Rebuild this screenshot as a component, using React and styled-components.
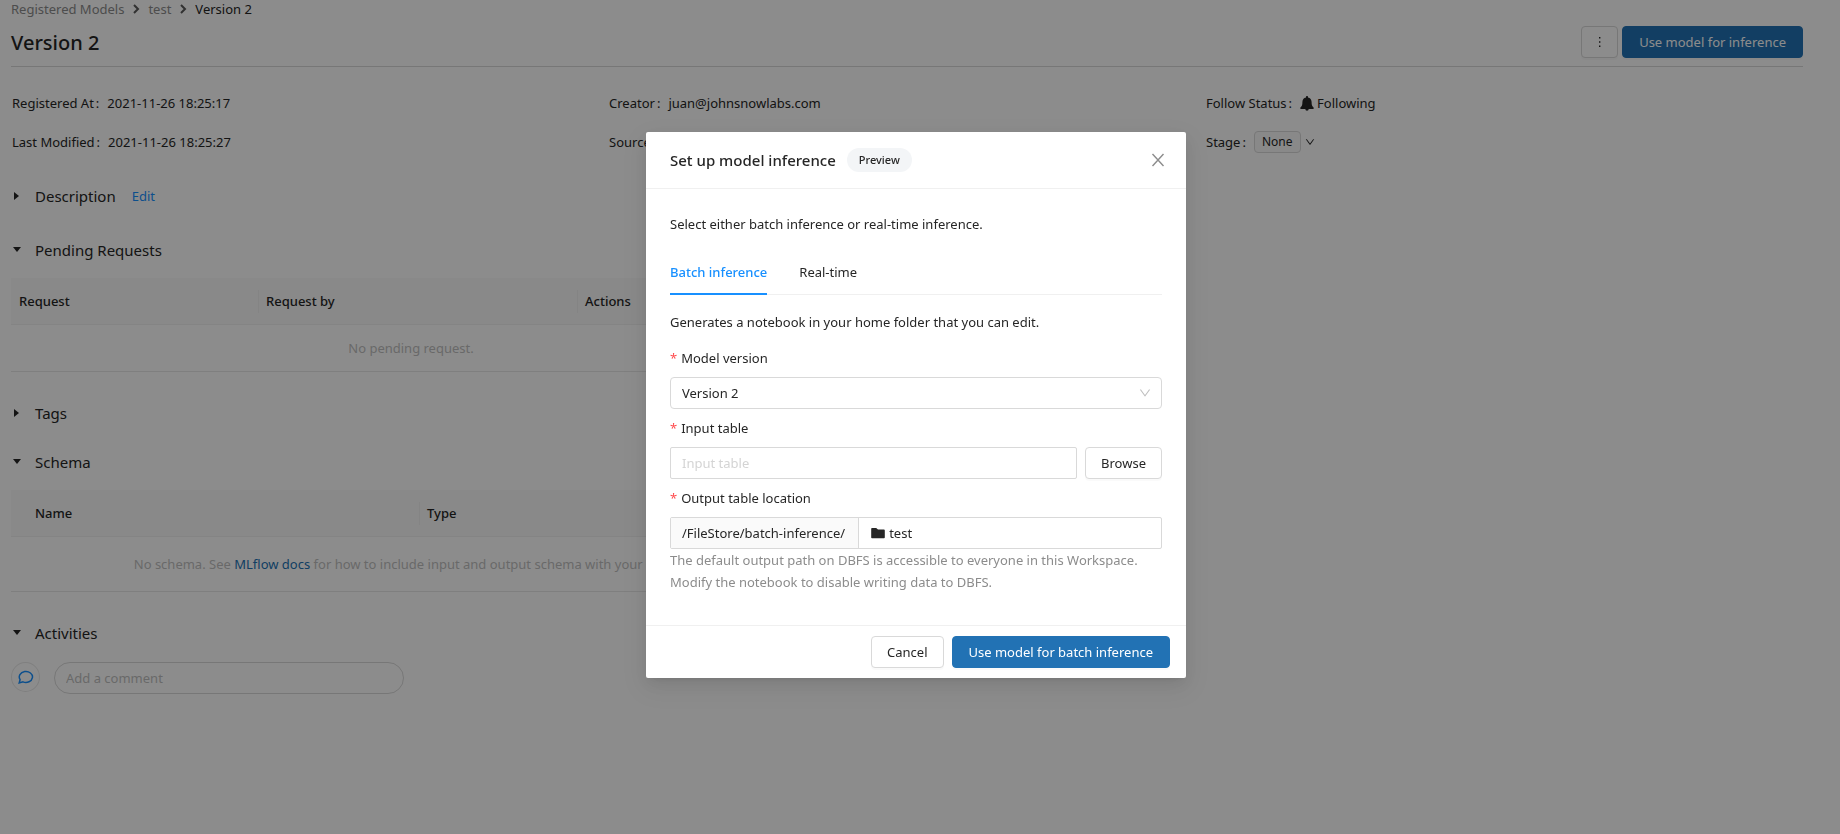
import React, { useState } from "react";
import styled, { createGlobalStyle } from "styled-components";

const GlobalStyle = createGlobalStyle`
  * {
    box-sizing: border-box;
  }

  body {
    margin: 0;
    background: #fff;
    color: #262626;
    font-family: "Noto Sans", "Open Sans", sans-serif;
    font-size: 13px;
    line-height: 22px;
  }

  button,
  input,
  select {
    font: inherit;
    color: inherit;
  }

  p,
  h1,
  h2 {
    margin: 0;
  }

  a {
    color: #2272b4;
    text-decoration: none;
  }
`;

const Page = styled.main`
  min-height: 100vh;
  padding: 0 37px 0 11px;
  overflow: hidden;
`;

const Breadcrumb = styled.nav`
  display: flex;
  align-items: center;
  gap: 7px;
  height: 18px;
  line-height: 18px;

  a {
    color: #8c8c8c;
  }

  svg {
    color: #595959;
  }
`;

const TitleBar = styled.header`
  display: flex;
  align-items: center;
  justify-content: space-between;
  height: 49px;
  border-bottom: 1px solid #d9d9d9;
`;

const Title = styled.h1`
  padding-top: 2px;
  font-size: 20px;
  font-weight: 500;
  line-height: 32px;
`;

const Actions = styled.div`
  display: flex;
  gap: ${(p) => p.$gap};
`;

const Button = styled.button`
  height: 32px;
  padding: 0 ${(p) => (p.$primary ? "16px" : "15px")};
  border: 1px solid ${(p) => (p.$primary ? "#2272b4" : "#d9d9d9")};
  border-radius: 4px;
  background: ${(p) => (p.$primary ? "#2272b4" : "#fff")};
  color: ${(p) => (p.$primary ? "#fff" : "#262626")};
  box-shadow: 0 2px 0 rgba(0, 0, 0, 0.02);
  white-space: nowrap;

  svg {
    display: block;
  }
`;

const Details = styled.dl`
  display: grid;
  grid-template-columns: repeat(3, 1fr);
  row-gap: 17px;
  margin: 25px 0 0;
  padding-left: 1px;
`;

const Detail = styled.div`
  display: flex;
  align-items: center;
  gap: 8px;
  height: 22px;

  dt::after {
    content: ":";
    margin-left: 2px;
  }

  dd {
    display: flex;
    align-items: center;
    gap: 3px;
    margin: 0;
  }
`;

const StageTag = styled.button`
  display: flex;
  align-items: center;
  gap: 4px;
  padding: 0;
  border: 0;
  background: none;
  font-size: 12px;

  span {
    height: 22px;
    padding: 0 7px;
    border: 1px solid #d9d9d9;
    border-radius: 4px;
    background: #fafafa;
    line-height: 20px;
  }
`;

const Section = styled.section`
  margin-top: ${(p) => p.$space};
`;

const SectionHead = styled.div`
  display: flex;
  align-items: center;
  gap: 16px;
  height: 24px;

  h2 {
    font-size: 15px;
    font-weight: 400;
    line-height: 24px;
  }

  a {
    color: #1890ff;
  }
`;

const Toggle = styled.button`
  display: flex;
  align-items: center;
  gap: 12px;
  padding: 0;
  border: 0;
  background: none;
`;

const DataTable = styled.table`
  width: 800px;
  margin-top: 16px;
  border-collapse: separate;
  border-spacing: 0;
  table-layout: fixed;

  th {
    height: 47px;
    padding: 0 8px;
    border-bottom: 1px solid #f0f0f0;
    background: #fafafa;
    text-align: left;
    font-weight: 500;
  }

  th:first-child {
    padding-left: ${(p) => p.$indent};
  }

  th + th {
    background: linear-gradient(#f0f0f0, #f0f0f0) left center / 1px 23px
      no-repeat #fafafa;
  }

  td {
    height: ${(p) => p.$rowHeight};
    border-bottom: 1px solid #e8e8e8;
    color: #bfbfbf;
    text-align: center;
  }
`;

const CommentRow = styled.div`
  display: flex;
  gap: 14px;
  margin-top: 17px;
`;

const Avatar = styled.span`
  display: flex;
  align-items: center;
  justify-content: center;
  width: 29px;
  height: 30px;
  border: 1px solid #e8e8e8;
  border-radius: 50%;
  color: #1890ff;
`;

const TextInput = styled.input`
  flex: ${(p) => (p.$pill ? "0 0 350px" : "1")};
  min-width: 0;
  height: 32px;
  padding: 0 11px;
  border: 1px solid #d9d9d9;
  border-radius: ${(p) => (p.$pill ? "16px" : "2px")};
  background: #fff;
  outline: 0;

  &::placeholder {
    color: ${(p) => (p.$pill ? "#bfbfbf" : "#d4d4d4")};
  }
`;

const Overlay = styled.div`
  position: fixed;
  inset: 0;
  display: flex;
  align-items: flex-start;
  justify-content: center;
  padding: 132px 8px 0 0;
  background: rgba(0, 0, 0, 0.45);
`;

const Modal = styled.div`
  width: 540px;
  border-radius: 2px;
  background: #fff;
  box-shadow: 0 3px 6px -4px rgba(0, 0, 0, 0.12),
    0 6px 16px 0 rgba(0, 0, 0, 0.08), 0 9px 28px 8px rgba(0, 0, 0, 0.05);
`;

const ModalHeader = styled.header`
  display: flex;
  align-items: center;
  gap: 11px;
  height: 57px;
  padding: 0 20px 0 24px;
  border-bottom: 1px solid #f0f0f0;

  h2 {
    font-size: 15px;
    font-weight: 500;
    line-height: 22px;
  }
`;

const Pill = styled.span`
  height: 24px;
  padding: 0 12px;
  border-radius: 12px;
  background: #f3f5f7;
  font-size: 11px;
  font-weight: 500;
  line-height: 24px;
`;

const CloseButton = styled.button`
  display: flex;
  margin-left: auto;
  padding: 0;
  border: 0;
  background: none;
  color: #8c8c8c;
`;

const ModalBody = styled.div`
  padding: 24px 24px 32px;
`;

const TabList = styled.div`
  display: flex;
  gap: 32px;
  margin: 14px 0 16px;
  border-bottom: 1px solid #f0f0f0;
`;

const Tab = styled.button`
  height: 46px;
  margin-bottom: -1px;
  padding: 2px 0 0;
  border: 0;
  border-bottom: 2px solid ${(p) => (p.$active ? "#1890ff" : "transparent")};
  background: none;
  color: ${(p) => (p.$active ? "#1890ff" : "#262626")};
  font-weight: ${(p) => (p.$active ? 500 : 400)};
`;

const Intro = styled.p`
  margin-bottom: 6px;
`;

const Field = styled.div`
  padding-top: 8px;

  label {
    display: block;
    height: 30px;
  }

  label::before {
    content: "*";
    margin: 0 4px 0 0;
    color: #ff4d4f;
  }
`;

const SelectBox = styled.div`
  display: grid;
  align-items: center;

  select,
  svg {
    grid-area: 1 / 1;
  }

  select {
    height: 32px;
    padding: 0 11px;
    border: 1px solid #d9d9d9;
    border-radius: 4px;
    background: #fff;
    appearance: none;
  }

  svg {
    justify-self: end;
    margin-right: 11px;
    color: #bfbfbf;
    pointer-events: none;
  }
`;

const InputRow = styled.div`
  display: flex;
  gap: 8px;
`;

const PathInput = styled.div`
  display: flex;
  align-items: center;
  height: 32px;
  border: 1px solid #d9d9d9;
  border-radius: 2px;

  span {
    padding: 0 13px 0 11px;
    border-right: 1px solid #d9d9d9;
    background: #fafafa;
    line-height: 30px;
  }

  svg {
    margin: 0 4px 0 12px;
  }

  input {
    flex: 1;
    min-width: 0;
    padding: 0;
    border: 0;
    outline: 0;
    background: none;
  }
`;

const Help = styled.p`
  color: #8c8c8c;
`;

const ModalFooter = styled.footer`
  display: flex;
  justify-content: flex-end;
  padding: 10px 16px;
  border-top: 1px solid #f0f0f0;
`;

function Crumb() {
  return (
    <svg width="10" height="10" viewBox="0 0 10 10" fill="none" stroke="currentColor" strokeWidth="2">
      <path d="M3 1l4 4-4 4" />
    </svg>
  );
}

function Dots() {
  return (
    <svg width="5" height="14" viewBox="0 0 5 14" fill="currentColor">
      <path d="M2 2h1.400v1.400H2zM2 6.300h1.400v1.400H2zM2 10.600h1.400V12H2z" />
    </svg>
  );
}

function Caret({ open }) {
  return (
    <svg width="12" height="12" viewBox="0 0 12 12" fill="currentColor">
      <path d={open ? "M2 3h8L6 8z" : "M3 2v8l5-4z"} />
    </svg>
  );
}

function Chevron({ size }) {
  return (
    <svg width={size} height={size} viewBox="64 64 896 896" fill="currentColor">
      <path d="M884 256h-75c-5.100 0-9.900 2.500-12.900 6.600L512 654.200 227.900 262.600c-3-4.100-7.800-6.600-12.900-6.600h-75c-6.500 0-10.300 7.400-6.500 12.700l352.600 486.100c12.800 17.600 39 17.600 51.700 0l352.600-486.100c3.900-5.300.1-12.700-6.400-12.700z" />
    </svg>
  );
}

function Bell() {
  return (
    <svg width="14" height="15" viewBox="0 0 14 15" fill="currentColor">
      <path d="M7 0c.6 0 1 .4 1 1v.5c2.300.5 3.600 2.300 3.600 4.500 0 3 .5 4.300 2 5.400V13H.4v-1.600c1.500-1.100 2-2.400 2-5.400 0-2.200 1.300-4 3.600-4.500V1c0-.6.4-1 1-1zM5.300 13h3.400a1.700 1.800 0 0 1-3.400 0z" />
    </svg>
  );
}

function Folder() {
  return (
    <svg width="14" height="12" viewBox="0 0 14 12" fill="currentColor">
      <path d="M1 1h4.200L7 2.600h6c.4 0 .8.300.8.800v7c0 .4-.4.800-.8.800H1c-.5 0-.8-.4-.8-.8V1.800c0-.5.3-.8.8-.8z" />
    </svg>
  );
}

function Collapsible({ title, open, space, extra, children }) {
  const [expanded, setExpanded] = useState(open);

  return (
    <Section $space={space}>
      <SectionHead>
        <Toggle aria-expanded={expanded} onClick={() => setExpanded(!expanded)}>
          <Caret open={expanded} />
          <h2>{title}</h2>
        </Toggle>
        {extra}
      </SectionHead>
      {expanded && children}
    </Section>
  );
}

function InferenceModal() {
  const [tab, setTab] = useState("batch");
  const [path, setPath] = useState("test");

  return (
    <Overlay>
      <Modal role="dialog" aria-labelledby="modal-title">
        <ModalHeader>
          <h2 id="modal-title">Set up model inference</h2>
          <Pill>Preview</Pill>
          <CloseButton aria-label="Close">
            <svg width="16" height="16" viewBox="0 0 16 16" fill="none" stroke="currentColor" strokeWidth="1.400">
              <path d="M2.500 2l11 12M13.500 2l-11 12" />
            </svg>
          </CloseButton>
        </ModalHeader>
        <ModalBody>
          <p>Select either batch inference or real-time inference.</p>
          <TabList role="tablist">
            <Tab role="tab" $active={tab === "batch"} onClick={() => setTab("batch")}>
              Batch inference
            </Tab>
            <Tab role="tab" $active={tab === "realtime"} onClick={() => setTab("realtime")}>
              Real-time
            </Tab>
          </TabList>
          <Intro>Generates a notebook in your home folder that you can edit.</Intro>
          <Field>
            <label htmlFor="version">Model version</label>
            <SelectBox>
              <select id="version">
                <option>Version 2</option>
              </select>
              <Chevron size={12} />
            </SelectBox>
          </Field>
          <Field>
            <label htmlFor="input-table">Input table</label>
            <InputRow>
              <TextInput id="input-table" placeholder="Input table" />
              <Button>Browse</Button>
            </InputRow>
          </Field>
          <Field>
            <label htmlFor="output-path">Output table location</label>
            <PathInput>
              <span>/FileStore/batch-inference/</span>
              <Folder />
              <input id="output-path" value={path} onChange={(e) => setPath(e.target.value)} />
            </PathInput>
          </Field>
          <Help>
            The default output path on DBFS is accessible to everyone in this Workspace. Modify the
            notebook to disable writing data to DBFS.
          </Help>
        </ModalBody>
        <ModalFooter>
          <Actions $gap="8px">
            <Button>Cancel</Button>
            <Button $primary>Use model for batch inference</Button>
          </Actions>
        </ModalFooter>
      </Modal>
    </Overlay>
  );
}

function App() {
  return (
    <>
      <GlobalStyle />
      <Page>
        <Breadcrumb>
          <a href="#models">Registered Models</a>
          <Crumb />
          <a href="#test">test</a>
          <Crumb />
          <span>Version 2</span>
        </Breadcrumb>
        <TitleBar>
          <Title>Version 2</Title>
          <Actions $gap="4px">
            <Button aria-label="More">
              <Dots />
            </Button>
            <Button $primary>Use model for inference</Button>
          </Actions>
        </TitleBar>

        {/* Version details */}
        <Details>
          <Detail>
            <dt>Registered At</dt>
            <dd>2021-11-26 18:25:17</dd>
          </Detail>
          <Detail>
            <dt>Creator</dt>
            <dd>juan@johnsnowlabs.com</dd>
          </Detail>
          <Detail>
            <dt>Follow Status</dt>
            <dd>
              <Bell />
              Following
            </dd>
          </Detail>
          <Detail>
            <dt>Last Modified</dt>
            <dd>2021-11-26 18:25:27</dd>
          </Detail>
          <Detail>
            <dt>Source Run</dt>
          </Detail>
          <Detail>
            <dt>Stage</dt>
            <dd>
              <StageTag>
                <span>None</span>
                <Chevron size={10} />
              </StageTag>
            </dd>
          </Detail>
        </Details>

        <Collapsible title="Description" space="31px" extra={<a href="#edit">Edit</a>} />
        <Collapsible title="Pending Requests" space="30px" open>
          <DataTable $indent="8px" $rowHeight="47px">
            <colgroup>
              <col width="247" />
              <col width="319" />
              <col />
            </colgroup>
            <thead>
              <tr>
                <th>Request</th>
                <th>Request by</th>
                <th>Actions</th>
              </tr>
            </thead>
            <tbody>
              <tr>
                <td colSpan="3">No pending request.</td>
              </tr>
            </tbody>
          </DataTable>
        </Collapsible>
        <Collapsible title="Tags" space="29px" />
        <Collapsible title="Schema" space="25px" open>
          <DataTable $indent="24px" $rowHeight="55px">
            <colgroup>
              <col width="408" />
              <col />
            </colgroup>
            <thead>
              <tr>
                <th>Name</th>
                <th>Type</th>
              </tr>
            </thead>
            <tbody>
              <tr>
                <td colSpan="2">
                  No schema. See <a href="#docs">MLflow docs</a> for how to include input and output
                  schema with your model.
                </td>
              </tr>
            </tbody>
          </DataTable>
        </Collapsible>
        <Collapsible title="Activities" space="29px" open>
          <CommentRow>
            <Avatar>
              <svg width="16" height="16" viewBox="0 0 16 16" fill="none" stroke="currentColor" strokeWidth="1.500">
                <path d="M1.200 14l.9-3.400A6.600 5.500 0 1 1 5 12.900z" />
              </svg>
            </Avatar>
            <TextInput $pill placeholder="Add a comment" aria-label="Add a comment" />
          </CommentRow>
        </Collapsible>
      </Page>
      <InferenceModal />
    </>
  );
}

export default App;
